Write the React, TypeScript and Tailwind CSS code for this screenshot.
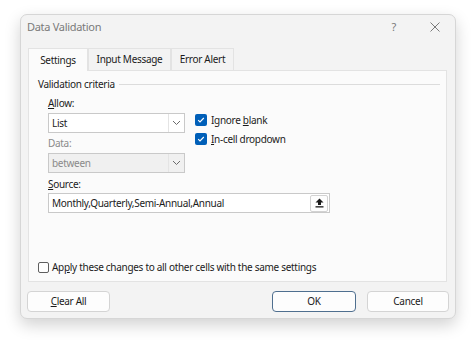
import React from "react";

const font = { fontFamily: '"Noto Sans", "Open Sans", Arial, sans-serif' };

const Chevron = () => (
  <svg width="9" height="6" viewBox="0 0 9 6" fill="none">
    <path d="M1 1l3.5 3.5L8 1" stroke="#6b6b6b" strokeWidth="1" />
  </svg>
);

const Check = () => (
  <span className="flex h-[12px] w-[12px] items-center justify-center rounded-[2px] bg-[#005fb8]">
    <svg width="8" height="8" viewBox="0 0 8 8" fill="none">
      <path d="M1.2 4.2l1.8 1.8 3.8-4" stroke="white" strokeWidth="1.1" />
    </svg>
  </span>
);

const Select = ({ value, disabled }: { value: string; disabled?: boolean }) => (
  <div
    className={`flex h-[20px] w-[137px] border border-[#c9c9c9] ${
      disabled ? "bg-[#f0f0f0] text-[#8a8a8a]" : "bg-white text-[#1b1b1b]"
    }`}
  >
    <div className="flex flex-1 items-center pl-[3px]">{value}</div>
    <div className="flex w-[16px] items-center justify-center border-l border-[#e4e4e4]">
      <Chevron />
    </div>
  </div>
);

const Tab = ({ label, w, active }: { label: string; w: string; active?: boolean }) => (
  <div
    className={`flex items-center justify-center border-t border-l border-r border-[#e3e3e3] ${w} ${
      active ? "relative z-10 -mb-px h-[23px] bg-[#fbfbfb]" : "h-[22px] bg-[#f3f3f3]"
    }`}
  >
    {label}
  </div>
);

export default function App() {
  return (
    <div
      className="h-[341px] w-[474px] overflow-hidden bg-white pl-[20px] pt-[14px] text-[10px] tracking-[-0.3px] text-[#1b1b1b]"
      style={font}
    >
      <div className="flex h-[305px] w-[436px] flex-col rounded-[7px] border border-[#d6d6d6] bg-[#f3f3f3] shadow-[0_6px_16px_rgba(0,0,0,0.18)]">
        {/* title bar */}
        <div className="flex h-[33px] items-start pl-[6px] pr-[15px] pt-[5px] text-[11px] text-[#7a7a7a]">
          <span className="flex-1 leading-[14px]">Data Validation</span>
          <span className="mr-[34px] leading-[14px]">?</span>
          <svg className="mt-[2px]" width="10" height="10" viewBox="0 0 10 10" fill="none">
            <path d="M0.5 0.5l9 9M9.5 0.5l-9 9" stroke="#7a7a7a" strokeWidth="1" />
          </svg>
        </div>

        {/* tabs */}
        <div className="flex pl-[7px]">
          <Tab label="Settings" w="w-[60px]" active />
          <Tab label="Input Message" w="w-[83px]" />
          <Tab label="Error Alert" w="w-[63px]" />
        </div>

        {/* panel */}
        <div className="ml-[7px] flex h-[212px] w-[419px] flex-col border border-[#e3e3e3] bg-[#fbfbfb] pl-[9px] pr-[6px]">
          <div className="mt-[6px] flex h-[14px] items-center">
            <span>Validation criteria</span>
            <div className="ml-[4px] h-px flex-1 bg-[#dcdcdc]" />
          </div>

          <div className="ml-[10px] mt-[5px] flex">
            <div className="flex w-[137px] flex-col">
              <div className="flex h-[14px] items-center">
                <span>
                  <span className="underline">A</span>llow:
                </span>
              </div>
              <div className="mt-[3px]">
                <Select value="List" />
              </div>
              <div className="mt-[3px] flex h-[14px] items-center text-[#8a8a8a]">Data:</div>
              <div className="mt-[3px]">
                <Select value="between" disabled />
              </div>
            </div>
            <div className="ml-[10px] mt-[18px] flex flex-col gap-[7px]">
              <div className="flex h-[12px] items-center gap-[4px]">
                <Check />
                <span>
                  Ignore <span className="underline">b</span>lank
                </span>
              </div>
              <div className="flex h-[12px] items-center gap-[4px]">
                <Check />
                <span>
                  <span className="underline">I</span>n-cell dropdown
                </span>
              </div>
            </div>
          </div>

          <div className="ml-[10px] mt-[4px] flex h-[14px] items-center">
            <span>
              <span className="underline">S</span>ource:
            </span>
          </div>
          <div className="ml-[10px] mt-[2px] flex h-[20px] w-[282px] items-center border border-[#c9c9c9] bg-white pl-[3px] pr-px">
            <span className="flex-1">Monthly,Quarterly,Semi-Annual,Annual</span>
            <div className="flex h-[17px] w-[18px] items-center justify-center rounded-[2px] border border-[#d2d2d2] bg-[#fdfdfd]">
              <svg width="9" height="10" viewBox="0 0 9 10" fill="#1b1b1b">
                <path d="M4.5 0.5L8.5 4.5H6V7H3V4.5H0.5Z" />
                <rect x="0.5" y="8.2" width="8" height="1.3" />
              </svg>
            </div>
          </div>

          <div className="mt-auto mb-[6px] flex items-center gap-[3px]">
            <span className="h-[11px] w-[11px] rounded-[2px] border border-[#5f5f5f] bg-white" />
            <span>
              Ap<span className="underline">p</span>ly these changes to all other cells with the same settings
            </span>
          </div>
        </div>

        {/* buttons */}
        <div className="mt-[9px] flex px-[6px]">
          <button className="h-[21px] w-[83px] rounded-[4px] border border-[#d4d4d4] bg-[#fdfdfd]">
            <span className="underline">C</span>lear All
          </button>
          <div className="flex-1" />
          <button className="h-[21px] w-[84px] rounded-[4px] border border-[#4f6f8f] bg-[#fdfdfd]">
            OK
          </button>
          <button className="ml-[11px] h-[21px] w-[82px] rounded-[4px] border border-[#d4d4d4] bg-[#fdfdfd]">
            Cancel
          </button>
        </div>
      </div>
    </div>
  );
}
